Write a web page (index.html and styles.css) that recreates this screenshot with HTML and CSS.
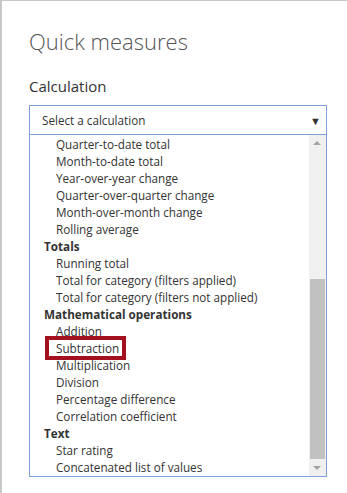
FILE: index.html
```html
<!DOCTYPE html>
<html lang="en">

    <head>
        <meta charset="UTF-8">
        <meta name="viewport" content="width=device-width, initial-scale=1.0">
        <title>Quick measures</title>
        <link rel="stylesheet" href="styles.css">
    </head>

    <body>
        <div class="panel">
            <h1 class="title">Quick measures</h1>
            <div class="label">Calculation</div>

            <div class="select">
                <span>Select a calculation</span>
                <span class="caret">&#9660;</span>
            </div>

            <div class="list">
                <div class="items">
                    <div class="item">Quarter-to-date total</div>
                    <div class="item">Month-to-date total</div>
                    <div class="item">Year-over-year change</div>
                    <div class="item">Quarter-over-quarter change</div>
                    <div class="item">Month-over-month change</div>
                    <div class="item">Rolling average</div>
                    <div class="group">Totals</div>
                    <div class="item">Running total</div>
                    <div class="item">Total for category (filters applied)</div>
                    <div class="item">Total for category (filters not applied)</div>
                    <div class="group">Mathematical operations</div>
                    <div class="item">Addition</div>
                    <div class="item"><span class="mark">Subtraction</span></div>
                    <div class="item">Multiplication</div>
                    <div class="item">Division</div>
                    <div class="item">Percentage difference</div>
                    <div class="item">Correlation coefficient</div>
                    <div class="group">Text</div>
                    <div class="item">Star rating</div>
                    <div class="item">Concatenated list of values</div>
                </div>
                <div class="scrollbar">
                    <div class="arrow up"></div>
                    <div class="thumb"></div>
                    <div class="arrow down"></div>
                </div>
            </div>
        </div>
    </body>

</html>
```

FILE: styles.css
```css
body {
    margin: 0;
    font-family: "Open Sans", "Noto Sans", sans-serif;
    color: #333;
    background: #fff;
}

.panel {
    height: 492px;
    border-top: 1px solid #c8c8c8;
    border-left: 2px solid #c8c8c8;
    padding: 0 20px 0 27px;
}

.title {
    margin: 0;
    padding-top: 25px;
    font-size: 22px;
    font-weight: 300;
    line-height: 30px;
    color: #555;
}

.label {
    margin-top: 20px;
    font-size: 15px;
    line-height: 20px;
    color: #333;
}

.select {
    margin-top: 9px;
    height: 28px;
    border: 1px solid #7f9fd8;
    display: flex;
    align-items: center;
    justify-content: space-between;
    padding: 0 5px 0 12px;
    font-size: 11.7px;
}

.caret {
    font-size: 11px;
    color: #333;
}

.list {
    display: flex;
    height: 341px;
    border: 1px solid #7f9fd8;
    border-top: none;
    overflow: hidden;
}

.items {
    flex: 1;
    padding-top: 1px;
}

.item,
.group {
    height: 17px;
    line-height: 17px;
    font-size: 11.7px;
    white-space: nowrap;
}

.item {
    padding-left: 26px;
}

.group {
    padding-left: 14px;
    font-weight: bold;
}

.mark {
    position: relative;
}

.mark::after {
    content: "";
    position: absolute;
    top: -4px;
    bottom: -4px;
    left: -11px;
    right: -7px;
    border: 4px solid #a4101f;
}

.scrollbar {
    width: 17px;
    background: #f0f0f0;
    display: flex;
    flex-direction: column;
}

.arrow {
    height: 17px;
    position: relative;
}

.arrow::after {
    content: "";
    position: absolute;
    left: 4px;
    border-left: 4px solid transparent;
    border-right: 4px solid transparent;
}

.up::after {
    top: 6px;
    border-bottom: 4px solid #a3a3a3;
}

.down::after {
    top: 7px;
    border-top: 4px solid #a3a3a3;
}

.thumb {
    margin-top: auto;
    height: 180px;
    margin-left: 1px;
    margin-right: 1px;
    background: #c1c1c1;
}
```
